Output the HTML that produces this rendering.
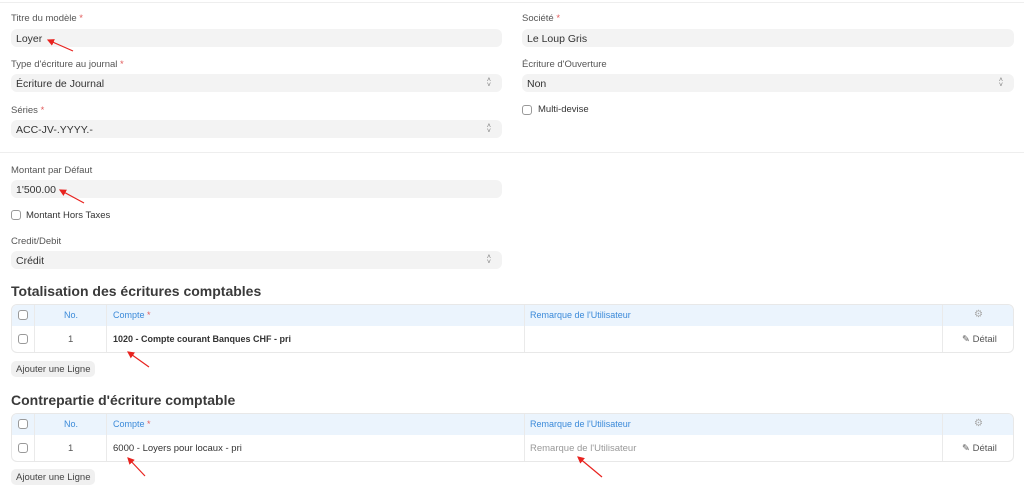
<!DOCTYPE html>
<html><head><meta charset="utf-8"><style>
*{box-sizing:border-box;margin:0;padding:0}
body{width:1024px;height:494px;background:#fff;font-family:"Liberation Sans",sans-serif;position:relative;overflow:hidden;color:#333}
.a{position:absolute}
.lbl{font-size:9.5px;color:#555}
.req{color:#e25b5b}
.inp{position:absolute;background:#f3f3f3;border-radius:6px;height:18px;font-size:10.5px;color:#333;padding:1px 5px 0;line-height:18px}
.arr{position:absolute;right:11px;top:4px;font-size:7px;line-height:5px;color:#777;text-align:center}
.cb{position:absolute;width:10px;height:10px;border:1px solid #999;border-radius:3px;background:#fff}
.h{position:absolute;font-size:14px;font-weight:bold;color:#3a3a3a}
.tbl{position:absolute;left:11px;width:1003px;border:1px solid #e8e8e8;border-radius:6px;overflow:hidden}
.th{height:21px;background:#ebf4fd;position:relative;font-size:9px;color:#3b8ad9}
.tr{height:26px;position:relative;font-size:9.5px}
.vl{position:absolute;top:0;bottom:0;width:1px;background:#eaeaea}
.btn{position:absolute;left:11px;background:#f0f0f0;border-radius:5px;font-size:9.5px;color:#444;height:16px;line-height:17px;padding:0 5px}
</style></head><body>
<div class="a" style="left:0;top:2px;width:1024px;height:1px;background:#eee"></div>
<div class="a" style="left:0;top:152px;width:1024px;height:1px;background:#eee"></div>

<div class="a lbl" style="left:11px;top:13px">Titre du modèle <span class="req">*</span></div>
<div class="inp" style="left:11px;top:29px;width:491px">Loyer</div>
<div class="a lbl" style="left:11px;top:59px">Type d'écriture au journal <span class="req">*</span></div>
<div class="inp" style="left:11px;top:74px;width:491px">Écriture de Journal<div class="arr">˄<br>˅</div></div>
<div class="a lbl" style="left:11px;top:105px">Séries <span class="req">*</span></div>
<div class="inp" style="left:11px;top:120px;width:491px">ACC-JV-.YYYY.-<div class="arr">˄<br>˅</div></div>

<div class="a lbl" style="left:522px;top:13px">Société <span class="req">*</span></div>
<div class="inp" style="left:522px;top:29px;width:492px">Le Loup Gris</div>
<div class="a lbl" style="left:522px;top:59px">Écriture d'Ouverture</div>
<div class="inp" style="left:522px;top:74px;width:492px">Non<div class="arr">˄<br>˅</div></div>
<div class="cb" style="left:522px;top:105px"></div>
<div class="a" style="left:538px;top:104px;font-size:9.5px">Multi-devise</div>

<div class="a lbl" style="left:11px;top:165px">Montant par Défaut</div>
<div class="inp" style="left:11px;top:180px;width:491px">1'500.00</div>
<div class="cb" style="left:11px;top:210px"></div>
<div class="a" style="left:26px;top:210px;font-size:9.5px">Montant Hors Taxes</div>
<div class="a lbl" style="left:11px;top:236px">Credit/Debit</div>
<div class="inp" style="left:11px;top:251px;width:491px">Crédit<div class="arr">˄<br>˅</div></div>

<div class="h" style="left:11px;top:283px">Totalisation des écritures comptables</div>
<div class="tbl" style="top:304px">
 <div class="th"><div class="cb" style="left:6px;top:5px"></div><span class="a" style="left:52px;top:5px">No.</span><span class="a" style="left:101px;top:5px">Compte <span class="req">*</span></span><span class="a" style="left:518px;top:5px">Remarque de l'Utilisateur</span><span class="a" style="left:962px;top:4px;color:#aaa;font-size:10px">⚙</span>
 <div class="vl" style="left:22px"></div><div class="vl" style="left:94px"></div><div class="vl" style="left:512px"></div><div class="vl" style="left:930px"></div></div>
 <div class="tr"><div class="cb" style="left:6px;top:8px"></div><span class="a" style="left:56px;top:8px;color:#555">1</span><span class="a" style="left:101px;top:8px;font-weight:bold;font-size:9px">1020 - Compte courant Banques CHF - pri</span><span class="a" style="left:950px;top:8px;color:#555">✎ Détail</span>
 <div class="vl" style="left:22px"></div><div class="vl" style="left:94px"></div><div class="vl" style="left:512px"></div><div class="vl" style="left:930px"></div></div>
</div>
<div class="btn" style="top:361px">Ajouter une Ligne</div>

<div class="h" style="left:11px;top:392px">Contrepartie d'écriture comptable</div>
<div class="tbl" style="top:413px">
 <div class="th"><div class="cb" style="left:6px;top:5px"></div><span class="a" style="left:52px;top:5px">No.</span><span class="a" style="left:101px;top:5px">Compte <span class="req">*</span></span><span class="a" style="left:518px;top:5px">Remarque de l'Utilisateur</span><span class="a" style="left:962px;top:4px;color:#aaa;font-size:10px">⚙</span>
 <div class="vl" style="left:22px"></div><div class="vl" style="left:94px"></div><div class="vl" style="left:512px"></div><div class="vl" style="left:930px"></div></div>
 <div class="tr"><div class="cb" style="left:6px;top:8px"></div><span class="a" style="left:56px;top:8px;color:#555">1</span><span class="a" style="left:101px;top:8px">6000 - Loyers pour locaux - pri</span><span class="a" style="left:518px;top:8px;color:#999">Remarque de l'Utilisateur</span><span class="a" style="left:950px;top:8px;color:#555">✎ Détail</span>
 <div class="vl" style="left:22px"></div><div class="vl" style="left:94px"></div><div class="vl" style="left:512px"></div><div class="vl" style="left:930px"></div></div>
</div>
<div class="btn" style="top:469px">Ajouter une Ligne</div>

<svg class="a" style="left:0;top:0" width="1024" height="494">
<defs><marker id="m" markerWidth="6" markerHeight="6" refX="1" refY="3" orient="auto"><path d="M6,0 L0,3 L6,6 Z" fill="#e8231f"/></marker></defs>
<g stroke="#e8231f" stroke-width="1.2" marker-start="url(#m)">
<line x1="48" y1="40" x2="73" y2="51"/>
<line x1="60" y1="190" x2="84" y2="203"/>
<line x1="128" y1="352" x2="149" y2="367"/>
<line x1="128" y1="458" x2="145" y2="476"/>
<line x1="578" y1="457" x2="602" y2="477"/>
</g></svg>
</body></html>
